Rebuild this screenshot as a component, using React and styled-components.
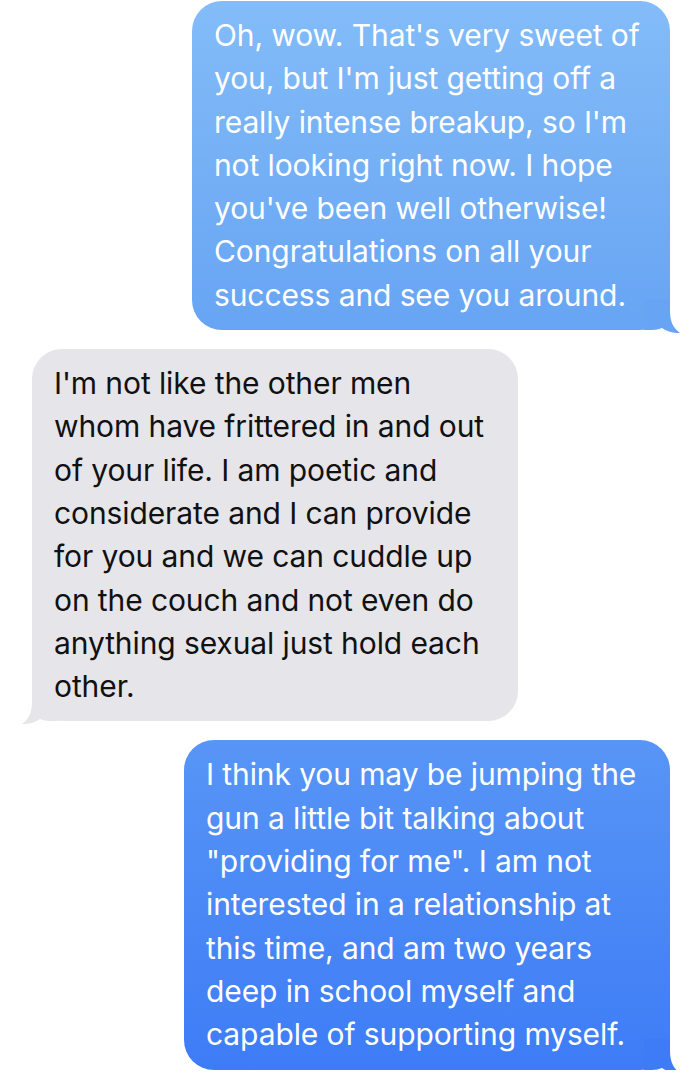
import { Fragment } from "react";
import styled, { createGlobalStyle } from "styled-components";

const messages = [
  {
    from: "me",
    tone: "light",
    width: 478,
    lines: [
      "Oh, wow. That's very sweet of",
      "you, but I'm just getting off a",
      "really intense breakup, so I'm",
      "not looking right now. I hope",
      "you've been well otherwise!",
      "Congratulations on all your",
      "success and see you around.",
    ],
  },
  {
    from: "them",
    tone: "gray",
    width: 486,
    lines: [
      "I'm not like the other men",
      "whom have frittered in and out",
      "of your life. I am poetic and",
      "considerate and I can provide",
      "for you and we can cuddle up",
      "on the couch and not even do",
      "anything sexual just hold each",
      "other.",
    ],
  },
  {
    from: "me",
    tone: "deep",
    width: 486,
    lines: [
      "I think you may be jumping the",
      "gun a little bit talking about",
      "\"providing for me\". I am not",
      "interested in a relationship at",
      "this time, and am two years",
      "deep in school myself and",
      "capable of supporting myself.",
    ],
  },
];

const tones = {
  light: { top: "#83bcf8", bottom: "#67a4f3", text: "#ffffff" },
  gray: { top: "#e5e5ea", bottom: "#e5e5ea", text: "#111111" },
  deep: { top: "#5895f6", bottom: "#3d7cf6", text: "#ffffff" },
};

export default function App() {
  return (
    <>
      <GlobalStyle />
      <Thread>
        {messages.map((m, i) => (
          <Row key={i} $from={m.from}>
            <Bubble $tone={m.tone} $width={m.width}>
              <Tail side={m.from === "me" ? "right" : "left"} color={tones[m.tone].bottom} />
              <Text>
                {m.lines.map((line, j) => (
                  <Fragment key={j}>
                    {line}
                    {j < m.lines.length - 1 && <br />}
                  </Fragment>
                ))}
              </Text>
            </Bubble>
          </Row>
        ))}
      </Thread>
    </>
  );
}

function Tail({ side, color }) {
  return (
    <TailSvg $side={side} width="36" height="34" viewBox="0 0 36 34">
      <path
        d="M0 0 H26 V12 C26 22 29 29 36 34 C29 34.3 23 32.5 18 29 C15 30.2 12 31 8 31 H0 Z"
        fill={color}
      />
    </TailSvg>
  );
}

const GlobalStyle = createGlobalStyle`
  html, body {
    margin: 0;
    padding: 0;
    background: #ffffff;
  }
  body {
    font-family: Inter, "Noto Sans", sans-serif;
    -webkit-font-smoothing: antialiased;
  }
`;

const Thread = styled.div`
  display: flex;
  flex-direction: column;
  gap: 19px;
  padding: 1px 30px 0 32px;
  width: 700px;
  box-sizing: border-box;
`;

const Row = styled.div`
  display: flex;
  justify-content: ${(p) => (p.$from === "me" ? "flex-end" : "flex-start")};
`;

const Bubble = styled.div`
  position: relative;
  width: ${(p) => p.$width}px;
  box-sizing: border-box;
  padding: 13px 18px 13px 22px;
  border-radius: 30px;
  background: linear-gradient(
    to bottom,
    ${(p) => tones[p.$tone].top},
    ${(p) => tones[p.$tone].bottom}
  );
  color: ${(p) => tones[p.$tone].text};
  font-size: 30px;
  line-height: 43.3px;
  letter-spacing: -0.1px;
  white-space: nowrap;
`;

const Text = styled.p`
  position: relative;
  z-index: 1;
  margin: 0;
`;

const TailSvg = styled.svg`
  position: absolute;
  z-index: 0;
  bottom: -3px;
  ${(p) => (p.$side === "right" ? "right: -10px;" : "left: -10px; transform: scaleX(-1);")}
  display: block;
`;
